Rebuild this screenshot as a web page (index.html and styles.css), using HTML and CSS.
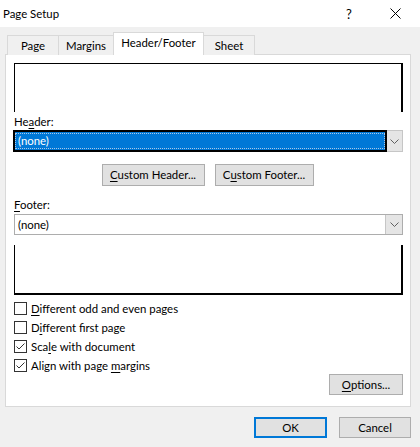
FILE: index.html
```html
<!DOCTYPE html>
<html>
<head>
<meta charset="utf-8">
<link rel="stylesheet" href="styles.css">
</head>
<body>
<div class="dialog">
  <div class="titlebar">
    <span class="title">Page Setup</span>
    <div class="tb-buttons">
      <span class="tb-btn help">?</span>
      <span class="tb-btn close">
        <svg width="11" height="11" viewBox="0 0 11 11"><path d="M0.5 0.5 L10.5 10.5 M10.5 0.5 L0.5 10.5" stroke="#000" stroke-width="1" fill="none"/></svg>
      </span>
    </div>
  </div>

  <div class="tabs">
    <div class="tab">Page</div>
    <div class="tab">Margins</div>
    <div class="tab active">Header/Footer</div>
    <div class="tab">Sheet</div>
  </div>

  <div class="panel">
    <div class="preview preview-top"></div>

    <div class="label">He<u>a</u>der:</div>
    <div class="combo focused">
      <div class="combo-value"><span class="focus-text">(none)</span></div>
      <div class="combo-arrow">
        <svg width="9" height="5" viewBox="0 0 9 5"><path d="M0.5 0.5 L4.5 4.5 L8.5 0.5" stroke="#606060" fill="none"/></svg>
      </div>
    </div>

    <div class="custom-row">
      <div class="btn btn-ch"><u>C</u>ustom Header...</div>
      <div class="btn btn-cf">C<u>u</u>stom Footer...</div>
    </div>

    <div class="label label-footer"><u>F</u>ooter:</div>
    <div class="combo plain">
      <div class="combo-value">(none)</div>
      <div class="combo-arrow">
        <svg width="9" height="5" viewBox="0 0 9 5"><path d="M0.5 0.5 L4.5 4.5 L8.5 0.5" stroke="#606060" fill="none"/></svg>
      </div>
    </div>

    <div class="preview preview-bottom"></div>

    <div class="checks">
      <div class="check"><span class="box"></span><span><u>D</u>ifferent odd and even pages</span></div>
      <div class="check"><span class="box"></span><span>D<u>i</u>fferent first page</span></div>
      <div class="check"><span class="box"><svg width="11" height="11" viewBox="0 0 11 11"><path d="M1.5 5.5 L4 8 L9.5 2.5" stroke="#333" stroke-width="1" fill="none"/></svg></span><span>Sca<u>l</u>e with document</span></div>
      <div class="check"><span class="box"><svg width="11" height="11" viewBox="0 0 11 11"><path d="M1.5 5.5 L4 8 L9.5 2.5" stroke="#333" stroke-width="1" fill="none"/></svg></span><span>Align with page <u>m</u>argins</span></div>
    </div>

    <div class="options-row">
      <div class="btn btn-options"><u>O</u>ptions...</div>
    </div>
  </div>

  <div class="footer">
    <div class="btn btn-ok">OK</div>
    <div class="btn btn-cancel">Cancel</div>
  </div>
</div>
</body>
</html>
```

FILE: styles.css
```css
* { box-sizing: border-box; }

html, body {
  margin: 0;
  padding: 0;
}

body {
  width: 420px;
  height: 447px;
  background: #f0f0f0;
  font-family: "Lato", "Noto Sans", sans-serif;
  font-size: 11.4px;
  color: #000;
  overflow: hidden;
}

u { text-decoration: underline; text-underline-offset: 2px; text-decoration-thickness: 1px; }

.dialog {
  display: flex;
  flex-direction: column;
  width: 420px;
  height: 447px;
}

.titlebar {
  height: 27px;
  background: #fff;
  display: flex;
  align-items: center;
  justify-content: space-between;
  padding-left: 3px;
}

.title {
  line-height: 16px;
}

.tb-buttons {
  display: flex;
  height: 27px;
  padding-right: 2px;
}

.tb-btn {
  width: 46px;
  height: 27px;
  display: flex;
  align-items: center;
  justify-content: center;
}

.help {
  font-size: 13px;
}

.tabs {
  display: flex;
  align-items: flex-end;
  margin-top: 6px;
  padding-left: 7px;
  height: 22px;
  position: relative;
  z-index: 2;
  margin-bottom: -1px;
}

.tab {
  height: 20px;
  padding: 0 2px;
  border: 1px solid #d9d9d9;
  border-bottom: none;
  border-right: none;
  background: #f0f0f0;
  display: flex;
  align-items: center;
  justify-content: center;
  line-height: 16px;
}

.tab:nth-child(1) { width: 51px; }
.tab:nth-child(2) { width: 55px; }
.tab:nth-child(4) { width: 51px; border-right: 1px solid #d9d9d9; border-left: none; }

.tab.active {
  width: 91px;
  height: 23px;
  background: #fff;
  border-right: 1px solid #d9d9d9;
  padding-bottom: 3px;
}

.panel {
  margin-left: 5px;
  width: 406px;
  height: 353px;
  background: #fff;
  border: 1px solid #d9d9d9;
  padding: 8px 7px 0 8px;
  display: flex;
  flex-direction: column;
}

.preview {
  height: 49px;
  border-left: 1px solid #000;
  border-right: 2px solid #000;
}

.preview-top {
  border-top: 1px solid #000;
  height: 49px;
}

.preview-bottom {
  margin-top: 10px;
  height: 50px;
  border-bottom: 2px solid #000;
}

.label {
  margin-top: 2px;
  height: 16px;
  line-height: 16px;
}

.label-footer {
  margin-top: 11px;
}

.combo {
  display: flex;
  height: 22px;
}

.combo.focused {
  margin-left: -1px;
}

.combo.focused .combo-value {
  flex: 1;
  background: #0078d7;
  border: 2px solid #000;
  color: #fff;
  padding: 1px 1px;
  display: flex;
  align-items: center;
}

.focus-text {
  outline: 1px dotted #a8c8e8;
  outline-offset: 0;
  flex: 1;
  height: 14px;
  line-height: 14px;
  padding-left: 2px;
}

.combo.focused .combo-arrow {
  width: 16px;
  height: 22px;
  background: #e5e5e5;
  border: 1px solid #c6c6c6;
  border-left: none;
  display: flex;
  align-items: center;
  justify-content: center;
}

.combo.plain {
  height: 21px;
  margin-top: 1px;
  border: 1px solid #adadad;
}

.combo.plain .combo-value {
  flex: 1;
  line-height: 19px;
  padding-left: 3px;
}

.combo.plain .combo-arrow {
  width: 17px;
  background: #e5e5e5;
  border-left: 1px solid #c6c6c6;
  display: flex;
  align-items: center;
  justify-content: center;
}

.custom-row {
  display: flex;
  justify-content: center;
  gap: 10px;
  margin-top: 12px;
  padding-right: 2px;
}

.btn {
  height: 22px;
  background: #e1e1e1;
  border: 1px solid #adadad;
  display: flex;
  align-items: center;
  justify-content: center;
  line-height: 16px;
}

.btn-ch { width: 103px; }
.btn-cf { width: 99px; }

.checks {
  display: flex;
  flex-direction: column;
  gap: 6px;
  margin-top: 7px;
}

.check {
  display: flex;
  align-items: center;
  height: 13px;
  gap: 4px;
}

.box {
  width: 13px;
  height: 13px;
  border: 1px solid #333;
  background: #fff;
  display: flex;
  align-items: center;
  justify-content: center;
  flex: none;
}

.options-row {
  display: flex;
  justify-content: flex-end;
  margin-top: 2px;
}

.btn-options {
  width: 74px;
  height: 21px;
}

.footer {
  display: flex;
  justify-content: flex-end;
  gap: 12px;
  padding-right: 9px;
  margin-top: 10px;
}

.btn-ok {
  width: 73px;
  height: 21px;
  border: 2px solid #0078d7;
}

.btn-cancel {
  width: 72px;
  height: 21px;
}
```
